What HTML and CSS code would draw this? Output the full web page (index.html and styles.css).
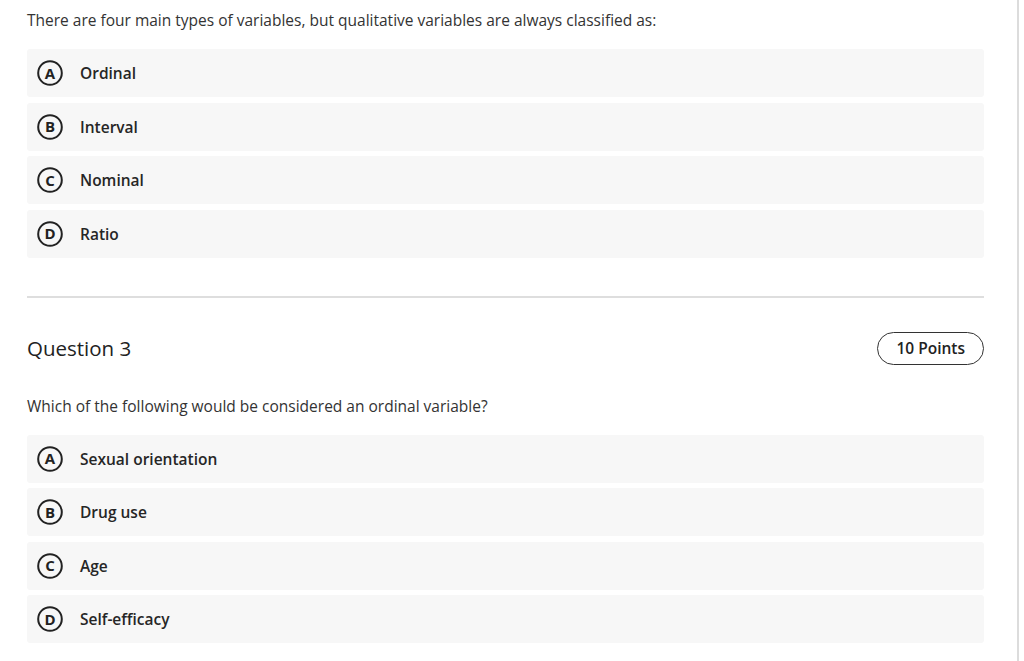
FILE: index.html
```html
<!DOCTYPE html>
<html>
<head>
<meta charset="utf-8">
<link rel="stylesheet" href="styles.css">
</head>
<body>
<div class="page">
  <div class="content">
    <p class="prompt">There are four main types of variables, but qualitative variables are always classified as:</p>
    <div class="options">
      <div class="option"><div class="badge"><svg class="ring" width="26" height="26" viewBox="0 0 26 26"><circle cx="13" cy="13" r="11.8" fill="none" stroke="#222" stroke-width="2"/></svg><span class="letter">A</span></div><span class="label">Ordinal</span></div>
      <div class="option"><div class="badge"><svg class="ring" width="26" height="26" viewBox="0 0 26 26"><circle cx="13" cy="13" r="11.8" fill="none" stroke="#222" stroke-width="2"/></svg><span class="letter">B</span></div><span class="label">Interval</span></div>
      <div class="option"><div class="badge"><svg class="ring" width="26" height="26" viewBox="0 0 26 26"><circle cx="13" cy="13" r="11.8" fill="none" stroke="#222" stroke-width="2"/></svg><span class="letter">C</span></div><span class="label">Nominal</span></div>
      <div class="option"><div class="badge"><svg class="ring" width="26" height="26" viewBox="0 0 26 26"><circle cx="13" cy="13" r="11.8" fill="none" stroke="#222" stroke-width="2"/></svg><span class="letter">D</span></div><span class="label">Ratio</span></div>
    </div>
    <hr class="divider">
    <div class="q-header">
      <h2 class="q-title">Question 3</h2>
      <span class="points">10 Points</span>
    </div>
    <p class="prompt prompt-q">Which of the following would be considered an ordinal variable?</p>
    <div class="options">
      <div class="option"><div class="badge"><svg class="ring" width="26" height="26" viewBox="0 0 26 26"><circle cx="13" cy="13" r="11.8" fill="none" stroke="#222" stroke-width="2"/></svg><span class="letter">A</span></div><span class="label">Sexual orientation</span></div>
      <div class="option"><div class="badge"><svg class="ring" width="26" height="26" viewBox="0 0 26 26"><circle cx="13" cy="13" r="11.8" fill="none" stroke="#222" stroke-width="2"/></svg><span class="letter">B</span></div><span class="label">Drug use</span></div>
      <div class="option"><div class="badge"><svg class="ring" width="26" height="26" viewBox="0 0 26 26"><circle cx="13" cy="13" r="11.8" fill="none" stroke="#222" stroke-width="2"/></svg><span class="letter">C</span></div><span class="label">Age</span></div>
      <div class="option"><div class="badge"><svg class="ring" width="26" height="26" viewBox="0 0 26 26"><circle cx="13" cy="13" r="11.8" fill="none" stroke="#222" stroke-width="2"/></svg><span class="letter">D</span></div><span class="label">Self-efficacy</span></div>
    </div>
  </div>
</div>
</body>
</html>
```

FILE: styles.css
```css
html, body {
  margin: 0;
  padding: 0;
  background: #fff;
}
body {
  font-family: "Open Sans", "Liberation Sans", sans-serif;
  color: #262626;
}
.page {
  width: 1019px;
  min-height: 661px;
  border-right: 2px solid #dcdcdc;
  box-sizing: border-box;
}
.content {
  padding: 9px 33px 0 27px;
}
.prompt {
  margin: 0 0 18px;
  font-size: 15.5px;
  line-height: 22px;
  color: #333;
}
.options {
  display: flex;
  flex-direction: column;
  gap: 5.5px;
}
.option {
  height: 48px;
  background: #f7f7f7;
  border-radius: 3px;
  display: flex;
  align-items: center;
  padding-left: 10px;
}
.badge {
  flex: none;
  display: grid;
  width: 26px;
  height: 26px;
  margin-right: 17px;
}
.ring {
  grid-area: 1 / 1;
  display: block;
}
.letter {
  grid-area: 1 / 1;
  align-self: center;
  justify-self: center;
  font-size: 15px;
  font-weight: 700;
  line-height: 1;
  color: #222;
}
.label {
  font-size: 15.5px;
  font-weight: 600;
  color: #262626;
}
.divider {
  margin: 38px 0 34px;
  border: 0;
  height: 2px;
  background: #dedede;
}
.q-header {
  display: flex;
  justify-content: space-between;
  align-items: center;
  height: 33px;
  margin-bottom: 30px;
}
.q-title {
  margin: 0;
  font-size: 20.5px;
  font-weight: 400;
  color: #222;
}
.points {
  display: flex;
  align-items: center;
  box-sizing: border-box;
  height: 33px;
  padding: 0 18px;
  border: 1px solid #333;
  border-radius: 17px;
  font-size: 15.5px;
  font-weight: 600;
  color: #222;
}
```
